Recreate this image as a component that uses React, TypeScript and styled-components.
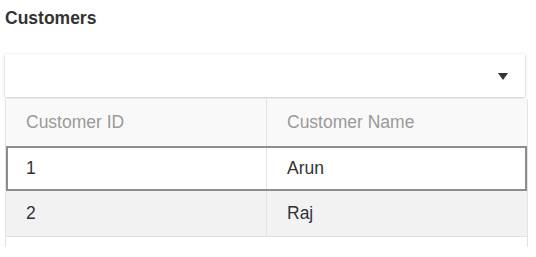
import React from "react";
import styled, { createGlobalStyle } from "styled-components";

const Global = createGlobalStyle`
  html, body { margin: 0; padding: 0; background: #fff; }
  body { font-family: "Liberation Sans", Arial, sans-serif; }
`;

const Page = styled.div`
  padding: 8px 8px 0 5px;
  display: flex;
  flex-direction: column;
`;

const Title = styled.h1`
  margin: 0 0 26px 0;
  font-size: 17.5px;
  line-height: 20px;
  font-weight: bold;
  color: #333;
`;

const Select = styled.div`
  width: 520px;
  height: 43px;
  box-sizing: border-box;
  background: #fff;
  box-shadow: 0 1px 3px rgba(0, 0, 0, 0.22), 0 0 1px rgba(0, 0, 0, 0.08);
  display: flex;
  align-items: center;
  justify-content: flex-end;
  padding-right: 17px;
  margin-bottom: 2px;
`;

const Arrow = styled.svg`
  width: 10px;
  height: 7px;
  display: block;
  margin-top: 2px;
`;

const Panel = styled.div`
  width: 523px;
  box-sizing: border-box;
  border-left: 1px solid #e3e3e3;
  border-right: 1px solid #e3e3e3;
  display: flex;
  flex-direction: column;
`;

const Row = styled.div<{ $variant: "head" | "selected" | "alt" }>`
  display: grid;
  grid-template-columns: 261px 1fr;
  box-sizing: border-box;
  height: ${(p) => (p.$variant === "head" ? "47px" : p.$variant === "alt" ? "46px" : "45px")};
  background: ${(p) =>
    p.$variant === "head" ? "#f9f9f9" : p.$variant === "alt" ? "#f2f2f2" : "#fff"};
  border-bottom: ${(p) => (p.$variant === "alt" ? "1px solid #e3e3e3" : "none")};
  outline: ${(p) => (p.$variant === "selected" ? "2px solid #8d8d8d" : "none")};
  outline-offset: -2px;
`;

const Cell = styled.div<{ $head?: boolean; $first?: boolean }>`
  display: flex;
  align-items: center;
  padding-left: 20px;
  border-right: ${(p) => (p.$first ? "1px solid #e3e3e3" : "none")};
  font-size: 17.5px;
  color: ${(p) => (p.$head ? "#9a9a9a" : "#333")};
`;

const Filler = styled.div`
  height: 10px;
  background: #fff;
`;

const rows = [
  { id: "1", name: "Arun" },
  { id: "2", name: "Raj" },
];

export default function App() {
  return (
    <>
      <Global />
      <Page>
        <Title>Customers</Title>
        <Select>
          <Arrow viewBox="0 0 10 7">
            <path d="M0 0 L10 0 L5 7 Z" fill="#333" />
          </Arrow>
        </Select>
        <Panel>
          <Row $variant="head">
            <Cell $head $first>Customer ID</Cell>
            <Cell $head>Customer Name</Cell>
          </Row>
          {rows.map((r, i) => (
            <Row key={r.id} $variant={i === 0 ? "selected" : "alt"}>
              <Cell $first>{r.id}</Cell>
              <Cell>{r.name}</Cell>
            </Row>
          ))}
          <Filler />
        </Panel>
      </Page>
    </>
  );
}
